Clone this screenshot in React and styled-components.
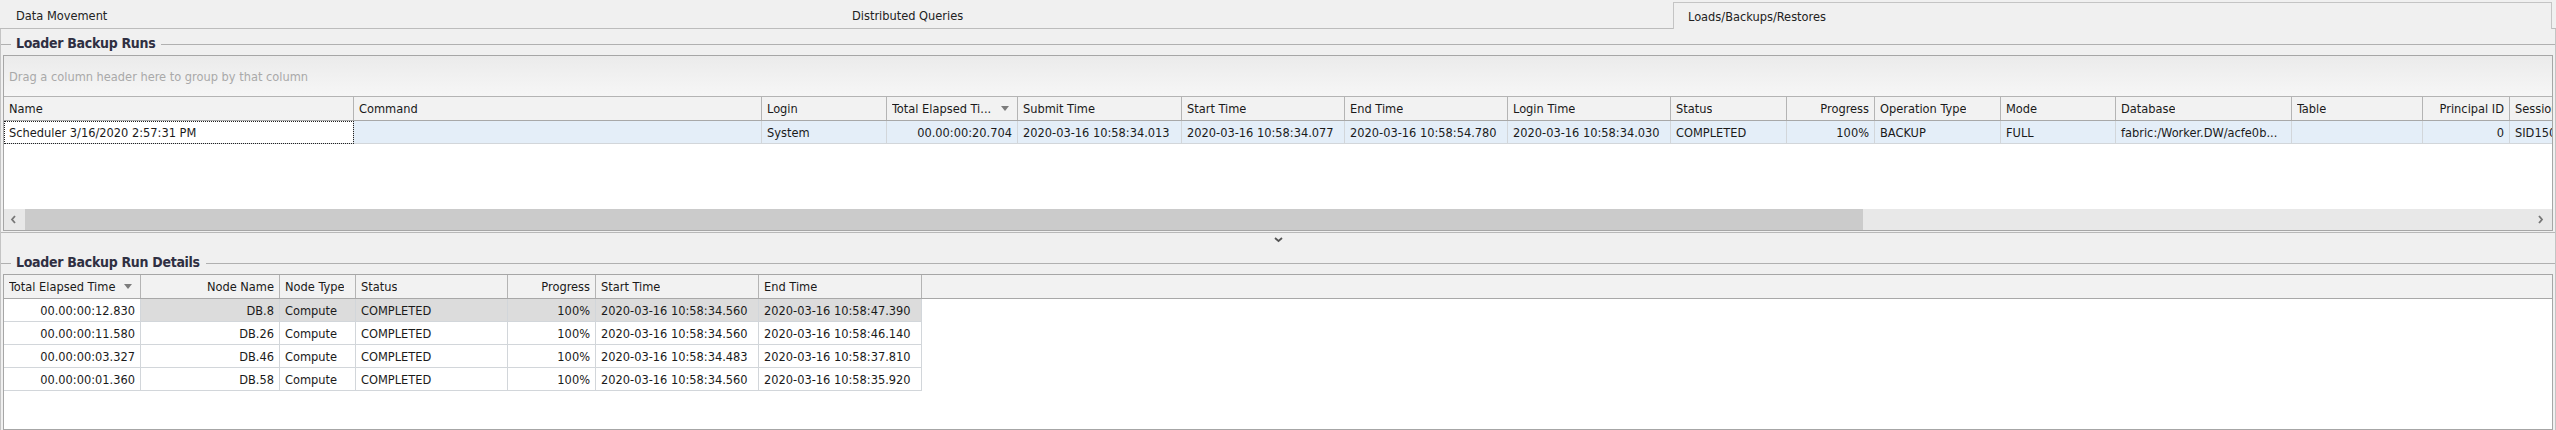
import React from 'react'
import styled, { createGlobalStyle } from 'styled-components'

const GlobalStyle = createGlobalStyle`
    html, body {
        margin: 0;
        padding: 0;
        background: #f0f0f0;
    }
    body {
        font-family: "DejaVu Sans Condensed", "Liberation Sans", sans-serif;
        font-size: 12.7px;
        color: #1a1a1a;
    }
`;

const runColumns = [
    { title: 'Name', width: 350 },
    { title: 'Command', width: 408 },
    { title: 'Login', width: 125 },
    { title: 'Total Elapsed Ti...', width: 131, sorted: true, right: true },
    { title: 'Submit Time', width: 164 },
    { title: 'Start Time', width: 163 },
    { title: 'End Time', width: 163 },
    { title: 'Login Time', width: 163 },
    { title: 'Status', width: 116 },
    { title: 'Progress', width: 88, right: true, headRight: true },
    { title: 'Operation Type', width: 126 },
    { title: 'Mode', width: 115 },
    { title: 'Database', width: 176 },
    { title: 'Table', width: 131 },
    { title: 'Principal ID', width: 87, right: true, headRight: true },
    { title: 'Session ID', width: 140 },
];

const runRows = [
    ['Scheduler 3/16/2020 2:57:31 PM', '', 'System', '00.00:00:20.704', '2020-03-16 10:58:34.013',
        '2020-03-16 10:58:34.077', '2020-03-16 10:58:54.780', '2020-03-16 10:58:34.030', 'COMPLETED',
        '100%', 'BACKUP', 'FULL', 'fabric:/Worker.DW/acfe0b...', '', '0', 'SID15043'],
];

const detailColumns = [
    { title: 'Total Elapsed Time', width: 137, sorted: true, right: true },
    { title: 'Node Name', width: 139, right: true, headRight: true },
    { title: 'Node Type', width: 76 },
    { title: 'Status', width: 152 },
    { title: 'Progress', width: 88, right: true, headRight: true },
    { title: 'Start Time', width: 163 },
    { title: 'End Time', width: 163 },
];

const detailRows = [
    ['00.00:00:12.830', 'DB.8', 'Compute', 'COMPLETED', '100%', '2020-03-16 10:58:34.560', '2020-03-16 10:58:47.390'],
    ['00.00:00:11.580', 'DB.26', 'Compute', 'COMPLETED', '100%', '2020-03-16 10:58:34.560', '2020-03-16 10:58:46.140'],
    ['00.00:00:03.327', 'DB.46', 'Compute', 'COMPLETED', '100%', '2020-03-16 10:58:34.483', '2020-03-16 10:58:37.810'],
    ['00.00:00:01.360', 'DB.58', 'Compute', 'COMPLETED', '100%', '2020-03-16 10:58:34.560', '2020-03-16 10:58:35.920'],
];

const Chevron = ({ dir }) => {
    const paths = {
        left: 'M5 1 L2 4.5 L5 8',
        right: 'M2 1 L5 4.5 L2 8',
        down: 'M1 2 L4.5 5 L8 2',
    };
    return (
        <svg width="9" height="9" viewBox="0 0 9 9">
            <path d={paths[dir]} fill="none" stroke={dir === 'down' ? '#555' : '#777'} strokeWidth="1.8" />
        </svg>
    );
};

const DataGrid = ({ columns, rows, height, groupPanel, scrollbar, rowTint, focusFirst, selectedRow }) => (
    <GridBox $height={height}>
        {groupPanel && <GroupPanel>Drag a column header here to group by that column</GroupPanel>}
        <GridHeader>
            {columns.map(col => (
                <HeaderCell key={col.title} $w={col.width} $right={col.headRight}>
                    <HeaderText>{col.title}</HeaderText>
                    {col.sorted && <SortArrow />}
                </HeaderCell>
            ))}
        </GridHeader>
        <GridBody>
            {rows.map((row, r) => (
                <Row key={r}>
                    {row.map((value, c) => {
                        let bg = rowTint || '#ffffff';
                        if (r === selectedRow && c > 0) bg = '#dcdcdc';
                        if (focusFirst && c === 0) bg = '#ffffff';
                        return (
                            <Cell key={c}
                                $w={columns[c].width}
                                $right={columns[c].right}
                                $bg={bg}
                                $focus={focusFirst && c === 0}
                            >
                                {value}
                            </Cell>
                        );
                    })}
                </Row>
            ))}
        </GridBody>
        {scrollbar && (
            <ScrollBar>
                <ScrollButton><Chevron dir="left" /></ScrollButton>
                <ScrollThumb />
                <ScrollTrack />
                <ScrollButton><Chevron dir="right" /></ScrollButton>
            </ScrollBar>
        )}
    </GridBox>
);

const App = () => {
    return (
        <Window>
            <GlobalStyle />
            <TabStrip>
                <Tab $w={836}>Data Movement</Tab>
                <Tab $w={837}>Distributed Queries</Tab>
                <Tab $w={879} $active>Loads/Backups/Restores</Tab>
            </TabStrip>
            <TabPage>
                <GroupTitle><span>Loader Backup Runs</span></GroupTitle>
                <DataGrid columns={runColumns}
                    rows={runRows}
                    height={176}
                    groupPanel
                    scrollbar
                    rowTint="#e4eef8"
                    focusFirst
                />
                <Splitter>
                    <Chevron dir="down" />
                </Splitter>
                <GroupTitle><span>Loader Backup Run Details</span></GroupTitle>
                <DataGrid columns={detailColumns}
                    rows={detailRows}
                    selectedRow={0}
                />
            </TabPage>
        </Window>
    )
}

export default App

const Window = styled.div`
    width: 2556px;
    height: 430px;
    overflow: hidden;
    display: flex;
    flex-direction: column;
    background: #f0f0f0;
`;

const TabStrip = styled.div`
    display: flex;
    align-items: flex-end;
    height: 29px;
    box-sizing: border-box;
    border-bottom: 1px solid #bcbcbc;
    flex: none;
`;

const Tab = styled.div`
    flex: 0 0 ${props => props.$w}px;
    box-sizing: border-box;
    height: ${props => props.$active ? '27px' : '28px'};
    margin-bottom: ${props => props.$active ? '-1px' : '0'};
    padding: ${props => props.$active ? '6px 0 0 14px' : '8px 0 0 16px'};
    border: ${props => props.$active ? '1px solid #c4c4c4' : 'none'};
    border-bottom: none;
    background: #f0f0f0;
    color: #222;
    white-space: nowrap;
`;

const TabPage = styled.div`
    flex: 1;
    display: flex;
    flex-direction: column;
    border-left: 1px solid #c4c4c4;
    border-right: 1px solid #c4c4c4;
    padding-top: 5px;
    min-height: 0;
`;

const GroupTitle = styled.div`
    display: flex;
    align-items: center;
    height: 21px;
    flex: none;
    font-weight: bold;
    font-size: 14px;
    letter-spacing: -0.3px;
    color: #2f2f42;
    &::before {
        content: "";
        width: 10px;
        height: 1px;
        background: #b0b0b0;
    }
    &::after {
        content: "";
        flex: 1;
        height: 1px;
        background: #b0b0b0;
    }
    span {
        margin: 0 6px 0 5px;
        padding-bottom: 3px;
        white-space: nowrap;
    }
`;

const GridBox = styled.div`
    margin: 0 2px;
    border: 1px solid #a6a6a6;
    background: #ffffff;
    display: flex;
    flex-direction: column;
    overflow: hidden;
    box-sizing: border-box;
    height: ${props => props.$height ? `${props.$height}px` : 'auto'};
    flex: ${props => props.$height ? 'none' : '1'};
`;

const GroupPanel = styled.div`
    height: 41px;
    flex: none;
    box-sizing: border-box;
    border-bottom: 1px solid #b4b4b4;
    background: linear-gradient(#ebebeb, #f6f6f6);
    color: #a9a9a9;
    padding-left: 5px;
    display: flex;
    align-items: center;
    white-space: nowrap;
`;

const GridHeader = styled.div`
    display: flex;
    height: 24px;
    flex: none;
    box-sizing: border-box;
    border-bottom: 1px solid #a8a8a8;
    background: #f2f2f2;
`;

const HeaderCell = styled.div`
    flex: 0 0 ${props => props.$w}px;
    box-sizing: border-box;
    border-right: 1px solid #b4b4b4;
    padding: 0 5px;
    display: flex;
    align-items: center;
    justify-content: ${props => props.$right ? 'flex-end' : 'flex-start'};
    white-space: nowrap;
    overflow: hidden;
`;

const HeaderText = styled.span`
    overflow: hidden;
    &:first-child:not(:last-child) {
        flex: 1;
    }
`;

const SortArrow = styled.span`
    width: 0;
    height: 0;
    margin: 0 3px 0 4px;
    border-left: 4px solid transparent;
    border-right: 4px solid transparent;
    border-top: 5px solid #7c7c7c;
`;

const GridBody = styled.div`
    flex: 1;
    overflow: hidden;
    background: #ffffff;
`;

const Row = styled.div`
    display: flex;
    height: 23px;
`;

const Cell = styled.div`
    flex: 0 0 ${props => props.$w}px;
    box-sizing: border-box;
    padding: 0 5px;
    display: flex;
    align-items: center;
    justify-content: ${props => props.$right ? 'flex-end' : 'flex-start'};
    background: ${props => props.$bg};
    border-right: 1px solid #d2d6da;
    border-bottom: 1px solid #d2d6da;
    outline: ${props => props.$focus ? '1px dotted #222' : 'none'};
    outline-offset: -1px;
    white-space: nowrap;
    overflow: hidden;
`;

const ScrollBar = styled.div`
    display: flex;
    height: 21px;
    flex: none;
    background: #e8e8e8;
`;

const ScrollButton = styled.div`
    flex: 0 0 21px;
    display: flex;
    align-items: center;
    justify-content: center;
`;

const ScrollThumb = styled.div`
    flex: 0 0 1838px;
    background: #cbcbcb;
`;

const ScrollTrack = styled.div`
    flex: 1;
`;

const Splitter = styled.div`
    margin-top: 1px;
    height: 21px;
    flex: none;
    box-sizing: border-box;
    border-top: 1px solid #b8b8b8;
    display: flex;
    justify-content: center;
    padding-top: 3px;
`;
